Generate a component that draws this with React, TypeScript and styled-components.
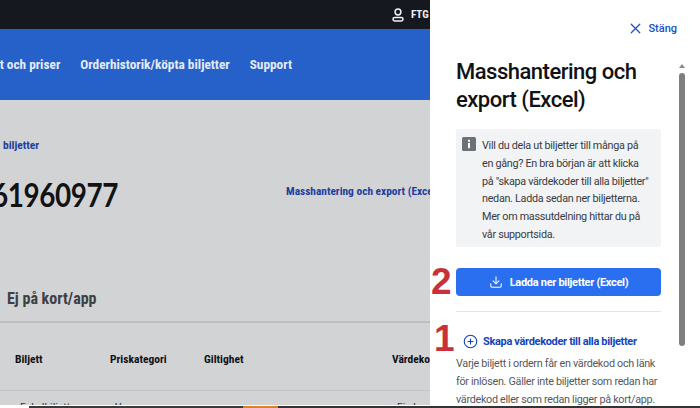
import styled, { createGlobalStyle } from "styled-components";
import { CirclePlus, Download, X } from "lucide-react";

const Global = createGlobalStyle`
  html, body {
    margin: 0;
    padding: 0;
    width: 700px;
    height: 408px;
    overflow: hidden;
    background: #fff;
  }
  * { box-sizing: border-box; }
`;

const narrow = `"Liberation Sans Narrow", "Roboto Condensed", Roboto, sans-serif`;
const body = `Roboto, "Noto Sans", sans-serif`;

const UserIcon = () => (
  <svg width="14" height="14" viewBox="0 0 14 14" fill="none" stroke="#f2f2f2" strokeWidth="1.5">
    <circle cx="7" cy="4" r="2.9" />
    <rect x="2" y="9.6" width="10" height="3.4" rx="1.7" />
  </svg>
);

const InfoIcon = () => (
  <svg width="14" height="14" viewBox="0 0 14 14">
    <rect width="14" height="14" rx="1.5" fill="#6c7077" />
    <rect x="6" y="2.8" width="2" height="2" fill="#fff" />
    <rect x="6" y="6" width="2" height="5.2" fill="#fff" />
  </svg>
);

const App = () => {
  return (
    <Page>
      <Global />
      <Main>
        <Backdrop>
          <TopBar>
            <UserIcon />
            <UserName>FTG</UserName>
          </TopBar>
          <Nav>
            <NavItem>t och priser</NavItem>
            <NavItem>Orderhistorik/köpta biljetter</NavItem>
            <NavItem>Support</NavItem>
          </Nav>
          <Content>
            <Crumb>biljetter</Crumb>
            <TitleRow>
              <OrderNumber>
                <OrderDigits>61960977</OrderDigits>
              </OrderNumber>
              <TitleLink>Masshantering och export (Exce</TitleLink>
            </TitleRow>
            <SectionTitle>Ej på kort/app</SectionTitle>
            <TableHead>
              <span>Biljett</span>
              <span>Priskategori</span>
              <span>Giltighet</span>
              <span>Värdeko</span>
            </TableHead>
            <TableRow>
              <span>Enkelbiljett</span>
              <span>Vuxen</span>
              <span></span>
              <span>Ej skapad</span>
            </TableRow>
          </Content>
        </Backdrop>

        <Drawer>
          <CloseRow>
            <X size={17} strokeWidth={1.8} />
            <span>Stäng</span>
          </CloseRow>
          <DrawerBody>
            <DrawerColumn>
              <Heading>Masshantering och export (Excel)</Heading>
              <InfoBox>
                <InfoIcon />
                <InfoText>
                  Vill du dela ut biljetter till många på<br />
                  en gång? En bra början är att klicka<br />
                  på "skapa värdekoder till alla biljetter"<br />
                  nedan. Ladda sedan ner biljetterna.<br />
                  Mer om massutdelning hittar du på<br />
                  vår supportsida.
                </InfoText>
              </InfoBox>
              <PrimaryButton>
                <Download size={14} strokeWidth={1.8} />
                Ladda ner biljetter (Excel)
              </PrimaryButton>
              <Divider />
              <ActionLink>
                <CirclePlus size={15} strokeWidth={1.8} />
                Skapa värdekoder till alla biljetter
              </ActionLink>
              <Paragraph>
                Varje biljett i ordern får en värdekod och länk för inlösen. Gäller inte biljetter som redan har värdekod eller som redan ligger på kort/app.
              </Paragraph>
              <StepMark $left={-25} $top={202}>2</StepMark>
              <StepMark $left={-22} $top={259}>1</StepMark>
            </DrawerColumn>
            <Scrollbar>
              <ScrollArrow />
              <ScrollThumb />
            </Scrollbar>
          </DrawerBody>
        </Drawer>
      </Main>
      <BottomStrip>
        <StripPart $w={29} $c="#ffffff" />
        <StripPart $w={214} $c="#3a3a3a" />
        <StripPart $w={35} $c="#d9822b" />
        <StripPart $w={422} $c="#333333" />
      </BottomStrip>
    </Page>
  );
};

export default App;

const Page = styled.div`
  width: 700px;
  height: 408px;
  display: flex;
  flex-direction: column;
  overflow: hidden;
`;

const Main = styled.div`
  height: 405px;
  display: flex;
`;

const Backdrop = styled.div`
  width: 430px;
  display: flex;
  flex-direction: column;
  overflow: hidden;
  background: #d2d3d5;
`;

const TopBar = styled.div`
  height: 29px;
  flex-shrink: 0;
  display: flex;
  align-items: center;
  padding-left: 391px;
  gap: 6px;
  background: #15191f;
  white-space: nowrap;

  svg {
    flex-shrink: 0;
  }
`;

const UserName = styled.span`
  font: 700 11px ${narrow};
  color: #f0f0f0;
`;

const Nav = styled.div`
  height: 71px;
  flex-shrink: 0;
  display: flex;
  align-items: center;
  justify-content: flex-end;
  gap: 20px;
  padding-right: 138px;
  background: #2561c9;
  white-space: nowrap;
`;

const NavItem = styled.span`
  font: 700 13.3px ${narrow};
  color: #e4eaf6;
`;

const Content = styled.div`
  flex: 1;
  min-height: 0;
  display: flex;
  flex-direction: column;
  overflow: hidden;

  > * {
    flex-shrink: 0;
  }
`;

const Crumb = styled.div`
  margin: 38px 0 0 3px;
  font: 700 11.5px/14px ${narrow};
  color: #1d3f9e;
`;

const TitleRow = styled.div`
  height: 40px;
  margin-top: 22px;
  display: flex;
  align-items: center;
  white-space: nowrap;
`;

const OrderNumber = styled.div`
  width: 118px;
  flex-shrink: 0;
  display: flex;
  justify-content: flex-end;
  overflow: hidden;
`;

const OrderDigits = styled.span`
  flex-shrink: 0;
  font: 700 33px/40px Lato, sans-serif;
  letter-spacing: -0.5px;
  color: #111214;
  transform: scaleX(0.845);
  transform-origin: right center;
`;

const TitleLink = styled.div`
  margin: -6px 0 0 168px;
  font: 700 11.4px/16px ${narrow};
  color: #1d3f9e;
`;

const SectionTitle = styled.div`
  margin-top: 67px;
  height: 42px;
  padding: 6px 0 0 7px;
  border-bottom: 2px solid #bdbec1;
  font: 700 16px/24px ${narrow};
  color: #3d4045;
`;

const TableHead = styled.div`
  height: 68px;
  display: grid;
  grid-template-columns: 95px 94px 188px 1fr;
  align-items: center;
  padding: 4px 0 0 15px;
  border-bottom: 1px solid #c2c3c6;
  white-space: nowrap;
  font: 700 11.5px ${narrow};
  color: #101114;
`;

const TableRow = styled(TableHead)`
  height: 30px;
  align-items: start;
  padding: 9px 0 0 20px;
  border-bottom: none;
  font-weight: 400;
  color: #34363a;
`;

const Drawer = styled.div`
  width: 270px;
  display: flex;
  flex-direction: column;
  overflow: hidden;
  background: #fff;
  border-bottom-right-radius: 6px;
`;

const CloseRow = styled.div`
  height: 58px;
  flex-shrink: 0;
  display: flex;
  align-items: center;
  justify-content: flex-end;
  gap: 4px;
  padding: 0 23px 1px 0;
  font: 500 11px ${body};
  color: #1b4fc4;
`;

const DrawerBody = styled.div`
  display: flex;
  padding-left: 26px;
`;

const DrawerColumn = styled.div`
  position: relative;
  width: 205px;
  flex-shrink: 0;
`;

const Heading = styled.h1`
  margin: 0;
  font: 500 22px/28px ${body};
  letter-spacing: -0.5px;
  color: #111214;
`;

const InfoBox = styled.div`
  margin-top: 15px;
  height: 118px;
  display: flex;
  gap: 6px;
  padding: 8px 6px;
  border-radius: 2px;
  background: #f2f3f5;

  svg {
    flex-shrink: 0;
  }
`;

const InfoText = styled.div`
  font: 400 10.8px/17.8px ${body};
  letter-spacing: -0.3px;
  white-space: nowrap;
  color: #383b40;
`;

const PrimaryButton = styled.div`
  margin-top: 21px;
  height: 28px;
  display: flex;
  align-items: center;
  justify-content: center;
  gap: 7px;
  border-radius: 4px;
  background: #2a6ff0;
  font: 700 11px ${body};
  letter-spacing: -0.3px;
  color: #fff;
`;

const Divider = styled.div`
  margin-top: 15px;
  height: 1px;
  background: #e3e4e6;
`;

const ActionLink = styled.div`
  margin-top: 21px;
  height: 16px;
  display: flex;
  align-items: center;
  gap: 5px;
  padding-left: 7px;
  font: 700 11px ${body};
  letter-spacing: -0.33px;
  color: #1544b8;
`;

const Paragraph = styled.p`
  margin: 6px 0 0;
  font: 400 10.8px/18px ${body};
  letter-spacing: -0.3px;
  color: #55585d;
`;

const StepMark = styled.div<{ $left: number; $top: number }>`
  position: absolute;
  left: ${(p) => p.$left}px;
  top: ${(p) => p.$top}px;
  font: 700 37px/44px "Liberation Sans", Arial, sans-serif;
  color: #c8313a;
`;

const Scrollbar = styled.div`
  margin-left: 18px;
  width: 5px;
  display: flex;
  flex-direction: column;
  align-items: center;
  padding-top: 6px;
  gap: 5px;
`;

const ScrollArrow = styled.div`
  width: 0;
  height: 0;
  border-left: 3px solid transparent;
  border-right: 3px solid transparent;
  border-bottom: 4px solid #8a8a8a;
`;

const ScrollThumb = styled.div`
  width: 6px;
  height: 273px;
  flex-shrink: 0;
  border-radius: 3px;
  background: #7f7f7f;
`;

const BottomStrip = styled.div`
  height: 3px;
  display: flex;
  border-top: 1px solid #fff;
`;

const StripPart = styled.div<{ $w: number; $c: string }>`
  width: ${(p) => p.$w}px;
  background: ${(p) => p.$c};
`;
